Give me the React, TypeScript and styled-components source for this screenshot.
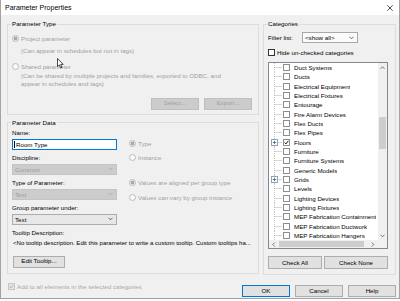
import React from "react";
import styled, { createGlobalStyle } from "styled-components";

const GlobalStyle = createGlobalStyle`
  * { box-sizing: border-box; }
  html, body { margin: 0; padding: 0; background: #ffffff; }
  body {
    font-family: "Liberation Sans", Arial, sans-serif;
    font-size: 6.2px;
    color: #000;
  }
`;

const Window = styled.div`
  position: relative;
  width: 400px;
  height: 299px;
  background: #f0f0f0;
  border: 1px solid #a3a3a3;
  border-top: 0;
  display: flex;
  flex-direction: column;
  overflow: hidden;
`;

const TitleBar = styled.div`
  height: 15px;
  flex: none;
  background: #ffffff;
  display: flex;
  align-items: center;
  justify-content: space-between;
  padding: 0 6px 0 4px;
`;

const Title = styled.span`
  font-size: 7px;
  color: #000;
`;

const Body = styled.div`
  flex: 1;
  display: flex;
  flex-direction: column;
  padding: 5px 3px 0 6px;
`;

const Main = styled.div`
  display: flex;
  gap: 4px;
  align-items: stretch;
`;

const LeftColumn = styled.div`
  width: 252px;
  flex: none;
  display: flex;
  flex-direction: column;
  gap: 4px;
`;

const Group = styled.fieldset<{ $pad: string; $w?: number }>`
  margin: 0;
  min-width: 0;
  border: 1px solid #dcdcdc;
  padding: ${(p) => p.$pad};
  display: flex;
  flex-direction: column;
  ${(p) => (p.$w ? `width: ${p.$w}px; flex: none;` : "")}
`;

const Legend = styled.legend`
  padding: 0 1px;
  margin-left: -1px;
  height: 8px;
  line-height: 8px;
  color: #000;
`;

const RadioRow = styled.div<{ $mt: number }>`
  display: flex;
  align-items: center;
  gap: 2px;
  height: 9px;
  margin-top: ${(p) => p.$mt}px;
  white-space: nowrap;
`;

const Radio = styled.span<{ $checked?: boolean }>`
  flex: none;
  width: 7px;
  height: 7px;
  border-radius: 50%;
  border: 1px solid #bdbdbd;
  background: ${(p) =>
    p.$checked
      ? "radial-gradient(circle, #a8a8a8 0 1.5px, #e6e6e6 1.9px)"
      : "#f8f8f8"};
`;

const DimText = styled.span`
  color: #a0a0a0;
`;

const Note = styled.div<{ $mt: number }>`
  margin-top: ${(p) => p.$mt}px;
  padding-left: 9px;
  line-height: 8.5px;
  color: #a0a0a0;
  white-space: nowrap;
`;

const ButtonRow = styled.div<{ $mt: number; $gap: number; $end?: boolean }>`
  display: flex;
  gap: ${(p) => p.$gap}px;
  margin-top: ${(p) => p.$mt}px;
  justify-content: ${(p) => (p.$end ? "flex-end" : "flex-start")};
`;

type Variant = "disabled" | "normal" | "default";

const Button = styled.button<{ $w: number; $h?: number; $variant?: Variant; $mt?: number; $ml?: number }>`
  flex: none;
  align-self: flex-start;
  width: ${(p) => p.$w}px;
  height: ${(p) => p.$h ?? 12}px;
  margin: ${(p) => p.$mt ?? 0}px 0 0 ${(p) => p.$ml ?? 0}px;
  padding: 0;
  font-family: inherit;
  font-size: 6.2px;
  line-height: 1;
  border: 1px solid
    ${(p) =>
      p.$variant === "disabled" ? "#bfbfbf" : p.$variant === "default" ? "#0078d7" : "#adadad"};
  background: ${(p) => (p.$variant === "disabled" ? "#cccccc" : "#e1e1e1")};
  color: ${(p) => (p.$variant === "disabled" ? "#a0a0a0" : "#000")};
`;

const DataTop = styled.div`
  display: flex;
  gap: 12px;
`;

const FormCol = styled.div`
  width: 105px;
  flex: none;
  display: flex;
  flex-direction: column;
`;

const RadioCol = styled.div`
  display: flex;
  flex-direction: column;
`;

const FieldLabel = styled.div<{ $mt: number }>`
  height: 8px;
  line-height: 8px;
  margin: ${(p) => p.$mt}px 0 2px;
  color: #000;
  white-space: nowrap;
`;

const TextInput = styled.div`
  height: 11px;
  background: #ffffff;
  border: 1px solid #0078d7;
  display: flex;
  align-items: center;
  padding-left: 1px;
  gap: 1px;
`;

const Caret = styled.span`
  width: 1px;
  height: 7px;
  background: #000;
`;

type ComboTone = "disabled" | "light" | "white";

const Combo = styled.div<{ $tone: ComboTone; $w?: number }>`
  height: 11px;
  ${(p) => (p.$w ? `width: ${p.$w}px; flex: none;` : "")}
  display: flex;
  align-items: center;
  justify-content: space-between;
  padding: 0 3px 0 2px;
  border: 1px solid
    ${(p) => (p.$tone === "disabled" ? "#c4c4c4" : p.$tone === "white" ? "#a8a8a8" : "#adadad")};
  background: ${(p) =>
    p.$tone === "disabled" ? "#cccccc" : p.$tone === "white" ? "#fbfbfb" : "#e7e7e7"};
  color: ${(p) => (p.$tone === "disabled" ? "#9c9c9c" : "#000")};
  white-space: nowrap;
`;

const TooltipText = styled.div`
  height: 8px;
  line-height: 8px;
  padding-left: 1px;
  font-size: 6.05px;
  white-space: nowrap;
  color: #000;
`;

const FilterRow = styled.div`
  display: flex;
  align-items: center;
  margin-top: 4px;
  height: 11px;
`;

const FilterLabel = styled.span`
  width: 34px;
  flex: none;
`;

const CheckRow = styled.div<{ $mt?: number; $ml?: number; $dim?: boolean }>`
  display: flex;
  align-items: center;
  gap: 2px;
  height: 9px;
  margin: ${(p) => p.$mt ?? 0}px 0 0 ${(p) => p.$ml ?? 0}px;
  white-space: nowrap;
  color: ${(p) => (p.$dim ? "#a8a8a8" : "#000")};
`;

const Box = styled.span<{ $tone: "dark" | "list" | "dim" }>`
  flex: none;
  width: 7px;
  height: 7px;
  display: grid;
  place-items: center;
  border: 1px solid
    ${(p) => (p.$tone === "dark" ? "#333333" : p.$tone === "dim" ? "#c6c6c6" : "#8e8e8e")};
  background: ${(p) => (p.$tone === "dim" ? "#e6e6e6" : "#ffffff")};
`;

const ListBox = styled.div`
  flex: 1;
  min-height: 0;
  margin-top: 5px;
  border: 1px solid #828790;
  background: #ffffff;
  display: grid;
  grid-template-columns: 1fr 9px;
  grid-template-rows: 1fr 8px;
  overflow: hidden;
`;

const Tree = styled.div`
  min-width: 0;
  min-height: 0;
  overflow: hidden;
  display: flex;
  flex-direction: column;
`;

const TreeRow = styled.div`
  flex: none;
  height: 9.33px;
  display: flex;
  align-items: center;
  white-space: nowrap;
`;

const TreeLabel = styled.span`
  margin-left: 4px;
  min-width: 0;
  overflow: hidden;
  color: #000;
`;

const VScroll = styled.div`
  background: #f0f0f0;
  display: flex;
  flex-direction: column;
  min-height: 0;
`;

const HScroll = styled.div`
  background: #f0f0f0;
  display: flex;
  align-items: stretch;
  min-width: 0;
`;

const ArrowCell = styled.div<{ $size: number; $vertical?: boolean }>`
  flex: none;
  ${(p) => (p.$vertical ? `height: ${p.$size}px;` : `width: ${p.$size}px;`)}
  display: grid;
  place-items: center;
`;

const Spacer = styled.div<{ $size?: number }>`
  ${(p) => (p.$size !== undefined ? `flex: none; flex-basis: ${p.$size}px;` : "flex: 1;")}
`;

const Thumb = styled.div<{ $size: number; $vertical?: boolean }>`
  flex: none;
  background: #cdcdcd;
  ${(p) =>
    p.$vertical
      ? `height: ${p.$size}px; margin: 0 1px;`
      : `width: ${p.$size}px; margin: 1px 0;`}
`;

const Corner = styled.div`
  background: #f0f0f0;
`;

const Footer = styled.div`
  display: flex;
  justify-content: space-between;
  align-items: flex-start;
  margin-top: 7px;
`;

const Cursor = styled.svg`
  position: absolute;
  left: 56px;
  top: 58px;
`;

const Chevron = ({ dir, color = "#555" }: { dir: "down" | "up" | "left" | "right"; color?: string }) => {
  const pts =
    dir === "down"
      ? "0.5,0.8 2.5,2.8 4.5,0.8"
      : dir === "up"
      ? "0.5,2.8 2.5,0.8 4.5,2.8"
      : dir === "left"
      ? "2.8,0.5 0.8,2.5 2.8,4.5"
      : "0.8,0.5 2.8,2.5 0.8,4.5";
  const vertical = dir === "down" || dir === "up";
  return (
    <svg width={vertical ? 5 : 4} height={vertical ? 4 : 5} viewBox={vertical ? "0 0 5 4" : "0 0 4 5"}>
      <polyline points={pts} fill="none" stroke={color} strokeWidth="0.8" />
    </svg>
  );
};

const Check = ({ color }: { color: string }) => (
  <svg width="5" height="5" viewBox="0 0 5 5">
    <polyline points="0.6,2.5 1.9,3.9 4.4,0.8" fill="none" stroke={color} strokeWidth="1" />
  </svg>
);

const Gutter = ({ expander }: { expander?: boolean }) => (
  <svg width="14" height="9.33" viewBox="0 0 14 9.33" style={{ flex: "none" }}>
    <line x1="5.5" y1="0" x2="5.5" y2="9.33" stroke="#c4c4c4" strokeWidth="1" strokeDasharray="1 1" />
    <line x1="5.5" y1="4.5" x2="13" y2="4.5" stroke="#b0b0b0" strokeWidth="1" strokeDasharray="1 1" />
    {expander && (
      <g>
        <rect x="2.5" y="1.5" width="6" height="6" fill="#ffffff" stroke="#8fa3c0" strokeWidth="1" />
        <line x1="3.8" y1="4.5" x2="7.2" y2="4.5" stroke="#4a5a70" strokeWidth="0.8" />
        <line x1="5.5" y1="2.8" x2="5.5" y2="6.2" stroke="#4a5a70" strokeWidth="0.8" />
      </g>
    )}
  </svg>
);

const categories: { name: string; checked?: boolean; expander?: boolean }[] = [
  { name: "Duct Systems" },
  { name: "Ducts" },
  { name: "Electrical Equipment" },
  { name: "Electrical Fixtures" },
  { name: "Entourage" },
  { name: "Fire Alarm Devices" },
  { name: "Flex Ducts" },
  { name: "Flex Pipes" },
  { name: "Floors", checked: true, expander: true },
  { name: "Furniture" },
  { name: "Furniture Systems" },
  { name: "Generic Models" },
  { name: "Grids", expander: true },
  { name: "Levels" },
  { name: "Lighting Devices" },
  { name: "Lighting Fixtures" },
  { name: "MEP Fabrication Containment" },
  { name: "MEP Fabrication Ductwork" },
  { name: "MEP Fabrication Hangers" },
];

export default function App() {
  return (
    <>
      <GlobalStyle />
      <Window>
        <TitleBar>
          <Title>Parameter Properties</Title>
          <svg width="6" height="6" viewBox="0 0 6 6">
            <line x1="0.3" y1="0.3" x2="5.7" y2="5.7" stroke="#222" strokeWidth="0.8" />
            <line x1="5.7" y1="0.3" x2="0.3" y2="5.7" stroke="#222" strokeWidth="0.8" />
          </svg>
        </TitleBar>
        <Body>
          <Main>
            <LeftColumn>
              <Group $pad="0 6px 4px 4px">
                <Legend>Parameter Type</Legend>
                <RadioRow $mt={6}>
                  <Radio $checked />
                  <DimText>Project parameter</DimText>
                </RadioRow>
                <Note $mt={4}>(Can appear in schedules but not in tags)</Note>
                <RadioRow $mt={6}>
                  <Radio />
                  <DimText>Shared parameter</DimText>
                </RadioRow>
                <Note $mt={1}>
                  (Can be shared by multiple projects and families, exported to ODBC, and
                  <br />
                  appear in schedules and tags)
                </Note>
                <ButtonRow $mt={9} $gap={5} $end>
                  <Button $w={48} $variant="disabled">Select...</Button>
                  <Button $w={48} $variant="disabled">Export...</Button>
                </ButtonRow>
              </Group>
              <Group $pad="0 6px 5px 4px">
                <Legend>Parameter Data</Legend>
                <DataTop>
                  <FormCol>
                    <FieldLabel $mt={2}>Name:</FieldLabel>
                    <TextInput>
                      <Caret />
                      <span>Room Type</span>
                    </TextInput>
                    <FieldLabel $mt={4}>Discipline:</FieldLabel>
                    <Combo $tone="disabled">
                      <span>Common</span>
                      <Chevron dir="down" color="#a6a6a6" />
                    </Combo>
                    <FieldLabel $mt={4}>Type of Parameter:</FieldLabel>
                    <Combo $tone="disabled">
                      <span>Text</span>
                      <Chevron dir="down" color="#a6a6a6" />
                    </Combo>
                    <FieldLabel $mt={4}>Group parameter under:</FieldLabel>
                    <Combo $tone="light">
                      <span>Text</span>
                      <Chevron dir="down" color="#444" />
                    </Combo>
                  </FormCol>
                  <RadioCol>
                    <RadioRow $mt={12}>
                      <Radio $checked />
                      <DimText>Type</DimText>
                    </RadioRow>
                    <RadioRow $mt={5}>
                      <Radio />
                      <DimText>Instance</DimText>
                    </RadioRow>
                    <RadioRow $mt={16}>
                      <Radio $checked />
                      <DimText>Values are aligned per group type</DimText>
                    </RadioRow>
                    <RadioRow $mt={6}>
                      <Radio />
                      <DimText>Values can vary by group instance</DimText>
                    </RadioRow>
                  </RadioCol>
                </DataTop>
                <FieldLabel $mt={4}>Tooltip Description:</FieldLabel>
                <TooltipText>
                  &lt;No tooltip description. Edit this parameter to write a custom tooltip. Custom tooltips ha...
                </TooltipText>
                <Button $w={52} $mt={9} $ml={1}>Edit Tooltip...</Button>
              </Group>
            </LeftColumn>
            <Group $pad="0 7px 5px 4px" $w={133}>
              <Legend>Categories</Legend>
              <FilterRow>
                <FilterLabel>Filter list:</FilterLabel>
                <Combo $tone="white" $w={56}>
                  <span>&lt;show all&gt;</span>
                  <Chevron dir="down" color="#444" />
                </Combo>
              </FilterRow>
              <CheckRow $mt={5}>
                <Box $tone="dark" />
                <span>Hide un-checked categories</span>
              </CheckRow>
              <ListBox>
                <Tree>
                  {categories.map((c) => (
                    <TreeRow key={c.name}>
                      <Gutter expander={c.expander} />
                      <Box $tone="list">{c.checked && <Check color="#111" />}</Box>
                      <TreeLabel>{c.name}</TreeLabel>
                    </TreeRow>
                  ))}
                </Tree>
                <VScroll>
                  <ArrowCell $size={9} $vertical>
                    <Chevron dir="up" />
                  </ArrowCell>
                  <Spacer $size={45} />
                  <Thumb $size={32} $vertical />
                  <Spacer />
                  <ArrowCell $size={9} $vertical>
                    <Chevron dir="down" />
                  </ArrowCell>
                </VScroll>
                <HScroll>
                  <ArrowCell $size={10}>
                    <Chevron dir="left" />
                  </ArrowCell>
                  <Thumb $size={85} />
                  <Spacer />
                  <ArrowCell $size={10}>
                    <Chevron dir="right" />
                  </ArrowCell>
                </HScroll>
                <Corner />
              </ListBox>
              <ButtonRow $mt={7} $gap={2}>
                <Button $w={54} $h={13}>Check All</Button>
                <Button $w={64} $h={13}>Check None</Button>
              </ButtonRow>
            </Group>
          </Main>
          <Footer>
            <CheckRow $ml={1} $dim>
              <Box $tone="dim">
                <Check color="#b0b0b0" />
              </Box>
              <span>Add to all elements in the selected categories</span>
            </CheckRow>
            <ButtonRow $mt={3} $gap={5}>
              <Button $w={48} $variant="default">OK</Button>
              <Button $w={48}>Cancel</Button>
              <Button $w={48}>Help</Button>
            </ButtonRow>
          </Footer>
        </Body>
        <Cursor width="7" height="11" viewBox="0 0 7 11">
          <path
            d="M0.5 0.5 L0.5 8.6 L2.4 6.9 L3.7 9.9 L5 9.3 L3.7 6.4 L6.2 6.4 Z"
            fill="#ffffff"
            stroke="#000"
            strokeWidth="0.7"
            strokeLinejoin="round"
          />
        </Cursor>
      </Window>
    </>
  );
}
